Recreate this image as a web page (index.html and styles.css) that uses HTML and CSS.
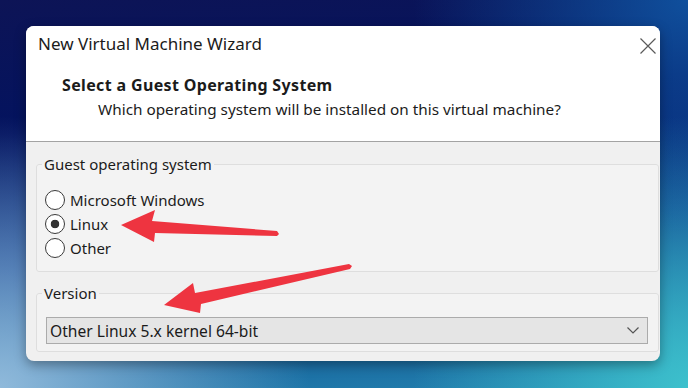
FILE: index.html
```html
<!DOCTYPE html>
<html lang="en">
<head>
    <meta charset="UTF-8">
    <meta name="viewport" content="width=device-width, initial-scale=1.0">
    <title>New Virtual Machine Wizard</title>
    <link rel="stylesheet" href="styles.css">
</head>
<body>
    <div class="window">
        <div class="header">
            <div class="titlebar">
                <span class="title">New Virtual Machine Wizard</span>
                <svg class="close" width="16" height="16" viewBox="0 0 16 16">
                    <path d="M0.5 0.5 L15.5 15.5 M15.5 0.5 L0.5 15.5" stroke="#5a5a5a" stroke-width="1.2" fill="none"/>
                </svg>
            </div>
            <h1>Select a Guest Operating System</h1>
            <p class="subtitle">Which operating system will be installed on this virtual machine?</p>
        </div>

        <div class="content">
            <fieldset class="group">
                <legend>Guest operating system</legend>
                <label class="radio"><input type="radio" name="os"> Microsoft Windows</label>
                <label class="radio"><input type="radio" name="os" checked> Linux</label>
                <label class="radio"><input type="radio" name="os"> Other</label>
            </fieldset>

            <fieldset class="group version">
                <legend>Version</legend>
                <div class="combo">
                    <span>Other Linux 5.x kernel 64-bit</span>
                    <svg width="12" height="7" viewBox="0 0 12 7">
                        <path d="M0.5 0.5 L6 6 L11.5 0.5" stroke="#555" stroke-width="1.2" fill="none"/>
                    </svg>
                </div>
            </fieldset>
        </div>
    </div>

    <!-- setas vermelhas por cima da janela -->
    <svg class="arrows" width="688" height="388" viewBox="0 0 688 388">
        <polygon points="121,225 155,210 152,221 277,231 279,234 277,236 155,233 154,242" fill="#ee3440"/>
        <polygon points="164,305 193,283 195,293 349,264 352,266 350,269 201,304 200,313" fill="#ee3440"/>
    </svg>
</body>
</html>
```

FILE: styles.css
```css
body {
    margin: 0;
    width: 688px;
    height: 388px;
    overflow: hidden;
    position: relative;
    font-family: 'Noto Sans', 'Open Sans', sans-serif;
    font-size: 15px;
    color: #1b1b1b;
    background:
        radial-gradient(ellipse 45% 70% at 0% 100%, rgba(150, 190, 222, 0.95), rgba(150, 190, 222, 0) 100%),
        radial-gradient(ellipse 40% 70% at 100% 100%, rgba(62, 196, 206, 0.95), rgba(62, 196, 206, 0) 100%),
        radial-gradient(ellipse 40% 60% at 100% 0%, rgba(16, 86, 164, 0.9), rgba(16, 86, 164, 0) 100%),
        linear-gradient(175deg, #0d1456 0%, #03135f 30%, #0b3a8a 60%, #1d72a6 90%, #2584b0 100%);
}

.window {
    margin: 26px 0 0 26px;
    width: 634px;
    height: 335px;
    border-radius: 8px;
    overflow: hidden;
    background: #f0f0f0;
    box-shadow: 0 4px 12px rgba(0, 0, 0, 0.35);
}

/* parte branca de cima */
.header {
    background: #fff;
    height: 115px;
    border-bottom: 1px solid #a3a3a3;
}

.titlebar {
    display: flex;
    justify-content: space-between;
    align-items: center;
    height: 20px;
    padding: 8px 4px 0 12px;
}

.title {
    font-size: 17px;
    line-height: 20px;
}

.close {
    margin-top: 3px;
}

h1 {
    margin: 21px 0 0 36px;
    font-size: 16px;
    font-weight: bold;
    letter-spacing: 0.35px;
    line-height: 20px;
}

.subtitle {
    margin: 3px 0 0 72px;
    font-size: 15.3px;
    line-height: 22px;
}

/* parte cinza */
.content {
    padding: 12px 1px 0 10px;
}

.group {
    margin: 0;
    border: 1px solid #dedede;
    border-radius: 3px;
    background: #f3f3f3;
    padding: 14px 0 11px 8px;
}

.group legend {
    margin-left: -3px;
    padding: 0 2px;
    line-height: 20px;
}

.radio {
    display: flex;
    align-items: center;
    gap: 5px;
    height: 24px;
}

.radio input {
    appearance: none;
    margin: 0;
    width: 20px;
    height: 20px;
    border: 1px solid #3a3a3a;
    border-radius: 50%;
    background: #fff;
}

.radio input:checked {
    background: radial-gradient(circle, #333 0 4px, #fff 4.6px);
}

.version {
    margin-top: 11px;
    padding: 14px 10px 7px 9px;
}

.version legend {
    margin-left: -4px;
}

.combo {
    display: flex;
    justify-content: space-between;
    align-items: center;
    height: 25px;
    border: 1px solid #ababab;
    background: #e5e5e5;
    padding: 0 8px 0 3px;
    font-size: 15.6px;
}

.arrows {
    position: absolute;
    left: 0;
    top: 0;
    pointer-events: none;
}
```
